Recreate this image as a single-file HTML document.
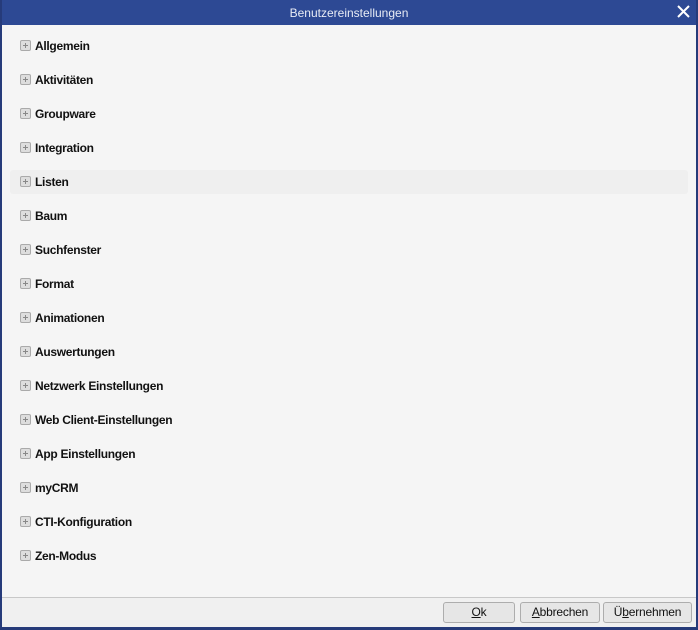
<!DOCTYPE html><html><head><style>
body{margin:0;width:698px;height:630px;background:#253a78;font-family:"Liberation Sans",sans-serif;overflow:hidden}
.win{position:absolute;left:0;top:0;width:694px;height:626px;border:2px solid #263b7a;border-top:0;background:#f5f5f5}
.title{position:absolute;left:0;top:0;width:694px;height:25px;background:#2d4994;color:#e8ecf5;font-size:12px;text-align:center;line-height:27px}
.x{position:absolute;right:6px;top:5px}
.item{position:absolute;left:18px;font-size:12px;letter-spacing:-0.3px;font-weight:bold;color:#111;height:14px;line-height:14px}
.item i{display:inline-block;width:9px;height:9px;border:1px solid #aaa;background:#ddd;border-radius:2px;vertical-align:-1px;margin-right:4px;position:relative}
.item i:before{content:"";position:absolute;left:2px;top:4px;width:5px;height:1px;background:#888}
.item i:after{content:"";position:absolute;left:4px;top:2px;width:1px;height:5px;background:#888}
.hl{position:absolute;left:8px;top:170px;width:678px;height:24px;background:#efefef;border-radius:3px}
.foot{position:absolute;left:0;top:597px;width:694px;height:29px;border-top:1px solid #c8c8c8;background:#f0f0f0}
.btn{position:absolute;top:4px;height:19px;border:1px solid #adadad;border-radius:3px;background:#e6e6e6;font-size:12px;letter-spacing:-0.2px;text-align:center;line-height:19px;color:#111}
</style></head><body><div class="win">
<div class="title">Benutzereinstellungen<svg class="x" width="13" height="13" viewBox="0 0 13 13"><path d="M1 1L12 12M12 1L1 12" stroke="#fff" stroke-width="2"/></svg></div>
<div class="hl"></div>
<div class="item" style="top:39px"><i></i>Allgemein</div>
<div class="item" style="top:73px"><i></i>Aktivitäten</div>
<div class="item" style="top:107px"><i></i>Groupware</div>
<div class="item" style="top:141px"><i></i>Integration</div>
<div class="item" style="top:175px"><i></i>Listen</div>
<div class="item" style="top:209px"><i></i>Baum</div>
<div class="item" style="top:243px"><i></i>Suchfenster</div>
<div class="item" style="top:277px"><i></i>Format</div>
<div class="item" style="top:311px"><i></i>Animationen</div>
<div class="item" style="top:345px"><i></i>Auswertungen</div>
<div class="item" style="top:379px"><i></i>Netzwerk Einstellungen</div>
<div class="item" style="top:413px"><i></i>Web Client-Einstellungen</div>
<div class="item" style="top:447px"><i></i>App Einstellungen</div>
<div class="item" style="top:481px"><i></i>myCRM</div>
<div class="item" style="top:515px"><i></i>CTI-Konfiguration</div>
<div class="item" style="top:549px"><i></i>Zen-Modus</div>
<div class="foot">
<div class="btn" style="left:441px;width:70px"><u>O</u>k</div>
<div class="btn" style="left:518px;width:78px"><u>A</u>bbrechen</div>
<div class="btn" style="left:601px;width:87px">Ü<u>b</u>ernehmen</div>
</div></div></body></html>
